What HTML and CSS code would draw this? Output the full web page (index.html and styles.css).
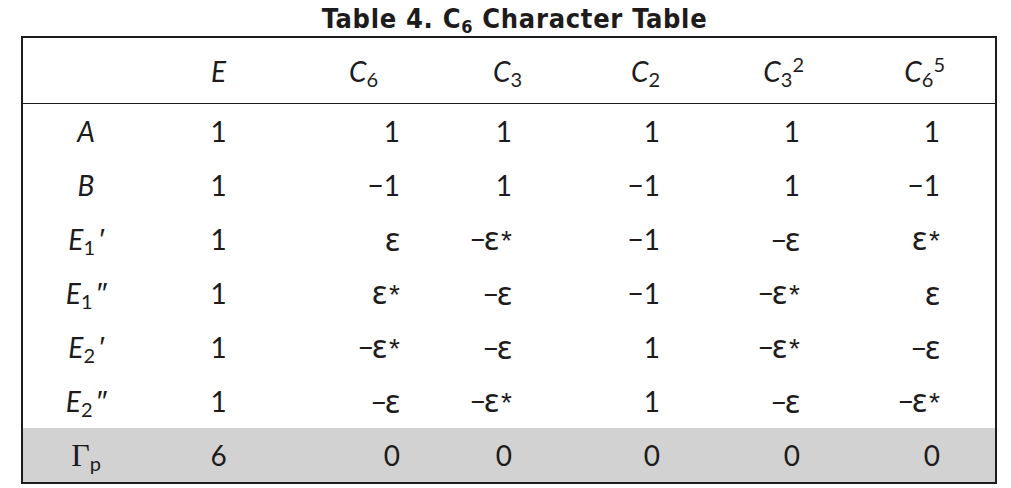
FILE: index.html
```html
<!DOCTYPE html>
<html>
<head>
<meta charset="utf-8">
<link rel="stylesheet" href="styles.css">
</head>
<body>
<div class="page">
  <h1 class="title">Table 4. <i>C</i><sub>6</sub> Character Table</h1>
  <div class="table">
    <div class="row head">
      <div class="cell"></div>
      <div class="cell"><i>E</i></div>
      <div class="cell"><i>C</i><sub>6</sub></div>
      <div class="cell"><i>C</i><sub>3</sub></div>
      <div class="cell"><i>C</i><sub>2</sub></div>
      <div class="cell"><i>C</i><sub>3</sub><sup>2</sup></div>
      <div class="cell"><i>C</i><sub>6</sub><sup>5</sup></div>
    </div>
    <div class="row">
      <div class="cell"><i>A</i></div>
      <div class="cell">1</div><div class="cell">1</div><div class="cell">1</div><div class="cell">1</div><div class="cell">1</div><div class="cell">1</div>
    </div>
    <div class="row">
      <div class="cell"><i>B</i></div>
      <div class="cell">1</div><div class="cell">−1</div><div class="cell">1</div><div class="cell">−1</div><div class="cell">1</div><div class="cell">−1</div>
    </div>
    <div class="row">
      <div class="cell"><i>E</i><sub>1</sub><span class="pr">′</span></div>
      <div class="cell">1</div><div class="cell"><span class="g">ε</span></div><div class="cell">−<span class="g">ε</span><span class="st">*</span></div><div class="cell">−1</div><div class="cell">−<span class="g">ε</span></div><div class="cell"><span class="g">ε</span><span class="st">*</span></div>
    </div>
    <div class="row">
      <div class="cell"><i>E</i><sub>1</sub><span class="pr">″</span></div>
      <div class="cell">1</div><div class="cell"><span class="g">ε</span><span class="st">*</span></div><div class="cell">−<span class="g">ε</span></div><div class="cell">−1</div><div class="cell">−<span class="g">ε</span><span class="st">*</span></div><div class="cell"><span class="g">ε</span></div>
    </div>
    <div class="row">
      <div class="cell"><i>E</i><sub>2</sub><span class="pr">′</span></div>
      <div class="cell">1</div><div class="cell">−<span class="g">ε</span><span class="st">*</span></div><div class="cell">−<span class="g">ε</span></div><div class="cell">1</div><div class="cell">−<span class="g">ε</span><span class="st">*</span></div><div class="cell">−<span class="g">ε</span></div>
    </div>
    <div class="row">
      <div class="cell"><i>E</i><sub>2</sub><span class="pr">″</span></div>
      <div class="cell">1</div><div class="cell">−<span class="g">ε</span></div><div class="cell">−<span class="g">ε</span><span class="st">*</span></div><div class="cell">1</div><div class="cell">−<span class="g">ε</span></div><div class="cell">−<span class="g">ε</span><span class="st">*</span></div>
    </div>
    <div class="row total">
      <div class="cell"><span class="gamma">Γ</span><sub>p</sub></div>
      <div class="cell">6</div><div class="cell">0</div><div class="cell">0</div><div class="cell">0</div><div class="cell">0</div><div class="cell">0</div>
    </div>
  </div>
</div>
</body>
</html>
```

FILE: styles.css
```css
html, body {
  margin: 0;
  padding: 0;
  background: #ffffff;
}

.page {
  width: 1011px;
  height: 488px;
  color: #1e1b1c;
  font-family: "Lato", "Noto Sans", sans-serif;
}

.title {
  margin: 0;
  height: 36px;
  box-sizing: border-box;
  padding-top: 5px;
  padding-left: 18px;
  text-align: center;
  font-family: "DejaVu Sans Condensed", "DejaVu Sans", sans-serif;
  font-stretch: condensed;
  font-weight: bold;
  font-size: 27px;
  line-height: 28px;
  letter-spacing: 0.7px;
}

.title i {
  font-style: normal;
}

.title sub {
  font-size: 18px;
  vertical-align: -5px;
  line-height: 0;
}

.table {
  margin-left: 21px;
  width: 976px;
  box-sizing: border-box;
  border: 2px solid #1c1c1c;
}

.row {
  display: grid;
  grid-template-columns: 124px 143px 130px 140px 140px 150px 145px;
  height: 54px;
  align-items: center;
  font-size: 28px;
}

.row.head {
  height: 64px;
  border-bottom: 1px solid #1c1c1c;
  padding-top: 1px;
}

.row.total {
  background: #d2d2d2;
}

.cell {
  text-align: right;
  white-space: nowrap;
  line-height: 30px;
}

.cell:nth-child(1) { text-align: center; padding-left: 2px; }
.cell:nth-child(2) { text-align: center; padding-left: 0; }
.cell:nth-child(3) { padding-right: 20px; }
.cell:nth-child(4) { padding-right: 48px; }
.cell:nth-child(5) { padding-right: 40px; }
.cell:nth-child(6) { padding-right: 50px; }
.cell:nth-child(7) { padding-right: 55px; }

.head .cell:nth-child(3) { padding-right: 42px; }
.head .cell:nth-child(4) { padding-right: 38px; }
.head .cell:nth-child(5) { padding-right: 40px; }
.head .cell:nth-child(6) { padding-right: 46px; }
.head .cell:nth-child(7) { padding-right: 50px; }

sub {
  font-size: 20px;
  vertical-align: -5px;
  line-height: 0;
  font-style: normal;
}

sup {
  font-size: 20px;
  vertical-align: 10px;
  line-height: 0;
}

.pr {
  font-size: 30px;
  margin-left: 3px;
  font-family: "Liberation Sans", sans-serif;
  font-style: italic;
  vertical-align: 1px;
}

.g {
  font-family: "Noto Sans", "DejaVu Sans", sans-serif;
  font-size: 32px;
  margin-left: -2px;
}

.st {
  font-family: "Liberation Sans", sans-serif;
  font-size: 28px;
  margin-left: 2px;
}

.gamma {
  font-family: "Liberation Serif", serif;
  font-size: 32px;
}

.total sub {
  font-family: "Lato", "Noto Sans", sans-serif;
}
```
